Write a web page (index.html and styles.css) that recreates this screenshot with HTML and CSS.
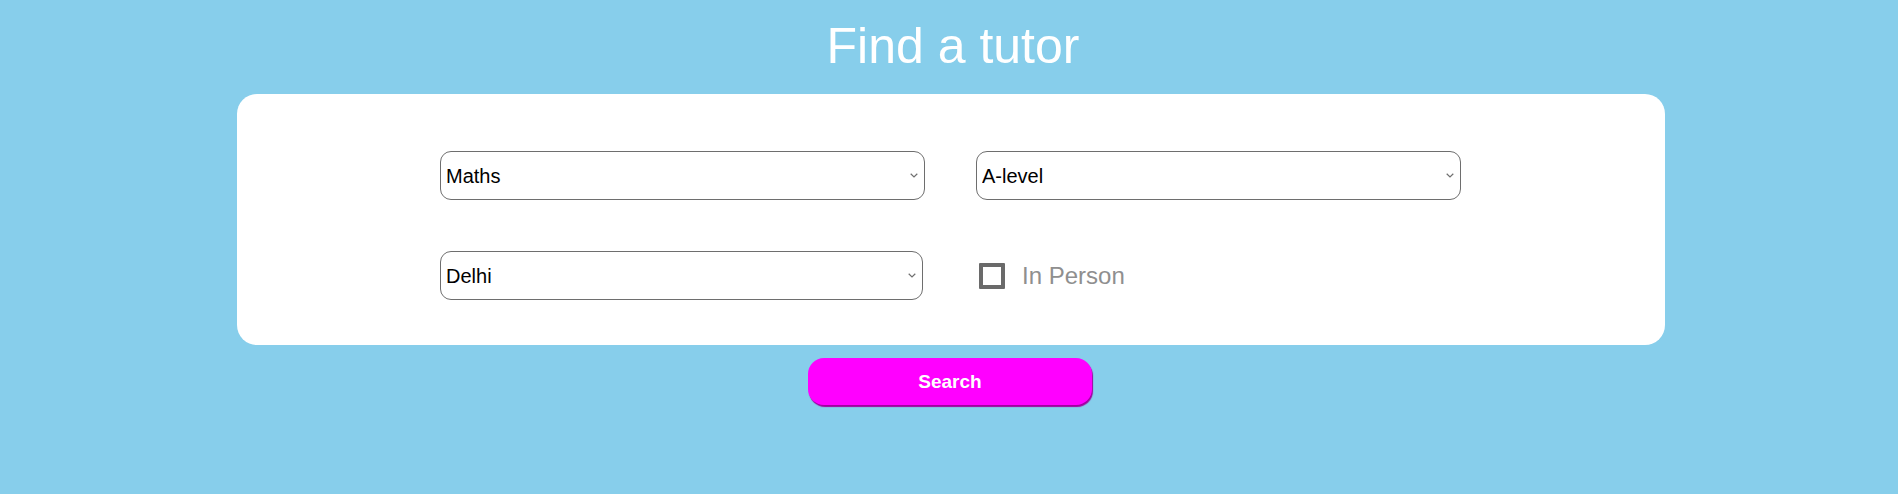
FILE: index.html
```html
<!DOCTYPE html>
<html lang="en">
<head>
<meta charset="utf-8">
<title>Find a tutor</title>
<link rel="stylesheet" href="styles.css">
</head>
<body>
  <h1 class="title">Find a tutor</h1>
  <form class="card">
    <div class="grid">
      <select class="field">
        <option>Maths</option>
      </select>
      <select class="field">
        <option>A-level</option>
      </select>
      <select class="field field-narrow">
        <option>Delhi</option>
      </select>
      <label class="check">
        <input type="checkbox" class="box">
        <span class="check-label">In Person</span>
      </label>
    </div>
  </form>
  <div class="actions">
    <button type="button" class="search">Search</button>
  </div>
</body>
</html>
```
FILE: styles.css
```css
html, body {
  margin: 0;
  padding: 0;
}
body {
  background: #87ceeb;
  font-family: "Liberation Sans", Arial, sans-serif;
  height: 494px;
  overflow: hidden;
}
.title {
  margin: 19px 0 20px;
  padding-left: 8px;
  font-size: 50px;
  line-height: 55px;
  font-weight: normal;
  color: #ffffff;
  text-align: center;
}
.card {
  width: 1428px;
  height: 251px;
  box-sizing: border-box;
  margin: 0 0 0 237px;
  background: #ffffff;
  border-radius: 20px;
  padding-top: 57px;
}
.grid {
  display: grid;
  grid-template-columns: 485px 485px;
  grid-auto-rows: 49px;
  column-gap: 51px;
  row-gap: 51px;
  justify-content: center;
  margin-left: -1px;
}
.field {
  appearance: none;
  -webkit-appearance: none;
  width: 485px;
  height: 49px;
  box-sizing: border-box;
  border: 1px solid #6e6e6e;
  border-radius: 11px;
  background-color: #ffffff;
  background-image: url("data:image/svg+xml;utf8,<svg xmlns='http://www.w3.org/2000/svg' width='8' height='5' viewBox='0 0 8 5'><path d='M0.7 0.7 L4 3.9 L7.3 0.7' fill='none' stroke='%23707070' stroke-width='1.2'/></svg>");
  background-repeat: no-repeat;
  background-position: right 6px center;
  padding: 0 20px 0 5px;
  font-family: "Liberation Sans", Arial, sans-serif;
  font-size: 20px;
  color: #000000;
  outline: none;
}
.field-narrow {
  width: 483px;
}
.check {
  display: flex;
  align-items: center;
  gap: 17px;
  padding-left: 3px;
}
.box {
  appearance: none;
  -webkit-appearance: none;
  margin: 0;
  width: 26px;
  height: 26px;
  box-sizing: border-box;
  border: 4px solid #6a6a6a;
  border-radius: 1px;
  background: #ffffff;
}
.check-label {
  font-size: 24px;
  color: #8f8f8f;
  line-height: 28px;
}
.actions {
  display: flex;
  justify-content: center;
  margin-top: 13px;
  padding-left: 2px;
}
.search {
  width: 284px;
  height: 47px;
  border: none;
  border-radius: 16px;
  background: #ff00ff;
  color: #ffffff;
  font-family: "Liberation Sans", Arial, sans-serif;
  font-weight: bold;
  font-size: 19px;
  box-shadow: 1px 2px 1px #a000a0;
  padding: 0;
}
```
